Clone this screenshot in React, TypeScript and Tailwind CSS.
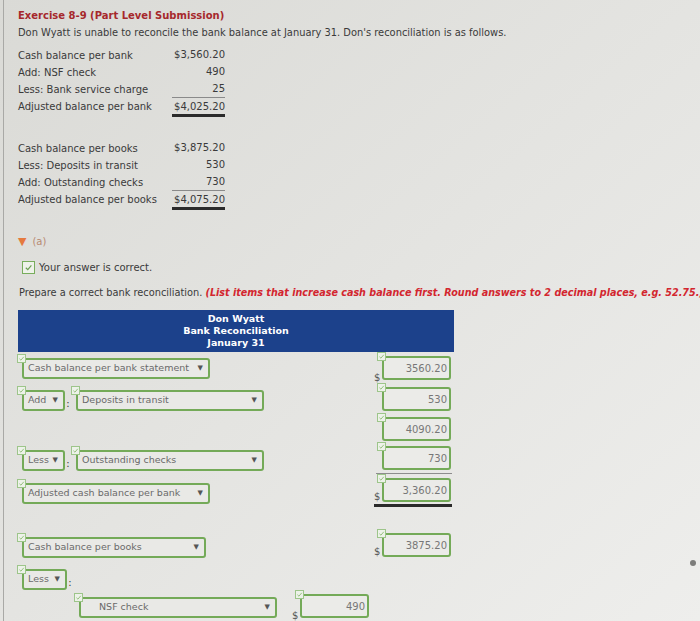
import React from 'react';

// small green "correct" marker that sits on the top-left corner of each field
function Tick({ className = '' }: { className?: string }) {
  return (
    <span
      className={`absolute w-[9px] h-[9px] border border-[#9dc58a] bg-[#edf2e9] flex items-center justify-center ${className}`}
    >
      <svg viewBox="0 0 10 10" className="w-[7px] h-[7px]">
        <path d="M2 5.3 L4.2 7.4 L8.2 2.6" fill="none" stroke="#95c07e" strokeWidth="1.4" />
      </svg>
    </span>
  );
}

function Select({ label, width, pad = 'pl-[4px]' }: { label: string; width: string; pad?: string }) {
  return (
    <div className="relative pt-[4px] pl-[5px]">
      <Tick className="top-0 left-0" />
      <div
        className={`${width} h-[21px] border-2 border-[#74aa58] rounded-[3px] bg-[#e9e9e6] flex items-center justify-between pr-[5px] ${pad} text-[#6a6a6a] text-[9.5px]`}
      >
        <span>{label}</span>
        <span className="text-[7px] text-[#555]">▼</span>
      </div>
    </div>
  );
}

function Amount({ value, dollar = false }: { value: string; dollar?: boolean }) {
  return (
    <div className="relative pt-[4px] pl-[8px]">
      <Tick className="top-0 left-[3px]" />
      {dollar && <span className="absolute left-0 bottom-[-2px] text-[10px] text-[#555]">$</span>}
      <div className="w-[69px] h-[24px] border-2 border-[#74aa58] rounded-[3px] bg-[#ebebe8] flex items-center justify-end pr-[2px] text-[#777]">
        {value}
      </div>
    </div>
  );
}

const bankRows = [
  ['Cash balance per bank', '$3,560.20'],
  ['Add: NSF check', '490'],
  ['Less: Bank service charge', '25'],
  ['Adjusted balance per bank', '$4,025.20'],
];

const bookRows = [
  ['Cash balance per books', '$3,875.20'],
  ['Less: Deposits in transit', '530'],
  ['Add: Outstanding checks', '730'],
  ['Adjusted balance per books', '$4,075.20'],
];

function MiniTable({ rows }: { rows: string[][] }) {
  return (
    <div className="flex flex-col">
      {rows.map(([label, amt], i) => {
        const last = i === rows.length - 1;
        return (
          <div key={label} className="flex h-[17px] items-center">
            <div className="w-[154px]">{label}</div>
            <div
              className={`w-[53px] text-right h-[17px] leading-[16px] ${
                last ? 'border-t border-[#8a8a8a] border-b-[3px] border-b-[#2b2b2b] h-[20px] leading-[17px]' : ''
              }`}
            >
              {amt}
            </div>
          </div>
        );
      })}
    </div>
  );
}

export default function App() {
  return (
    <div
      className="w-[700px] h-[621px] overflow-hidden bg-linear-to-br from-[#dadad6] via-[#e4e4e1] to-[#eeeeec] text-[10px] text-[#3a3a3a]"
      style={{ fontFamily: '"DejaVu Sans", Verdana, sans-serif' }}
    >
      <div className="ml-[3px] h-full border-l border-[#a9a9a6] pl-[14px] pt-[8px] relative">
        <div className="h-[16px] leading-[16px] font-bold text-[#a6282c]">Exercise 8-9 (Part Level Submission)</div>
        <div className="mt-[1px] h-[16px] leading-[16px] whitespace-nowrap text-[9.9px]">
          Don Wyatt is unable to reconcile the bank balance at January 31. Don's reconciliation is as follows.
        </div>

        <div className="mt-[6px]">
          <MiniTable rows={bankRows} />
        </div>
        <div className="mt-[25px]">
          <MiniTable rows={bookRows} />
        </div>

        <div className="mt-[26px] flex items-center gap-[6px] h-[14px]">
          <span className="text-[#e57a3e] text-[11px] leading-none">▼</span>
          <span className="text-[#b88a72]">(a)</span>
        </div>

        <div className="mt-[12px] flex items-center gap-[4px] pl-[4px] h-[14px]">
          <span className="w-[13px] h-[13px] border border-[#78ad5c] bg-[#eef2ea] flex items-center justify-center">
            <svg viewBox="0 0 10 10" className="w-[9px] h-[9px]">
              <path d="M2 5.3 L4.2 7.4 L8.2 2.6" fill="none" stroke="#6c9e52" strokeWidth="1.3" />
            </svg>
          </span>
          <span>Your answer is correct.</span>
        </div>

        <div className="mt-[12px] h-[14px] whitespace-nowrap pl-[1px] text-[9.8px]">
          Prepare a correct bank reconciliation.{' '}
          <span className="text-[#d3262f] font-bold italic text-[9.6px]">
            (List items that increase cash balance first. Round answers to 2 decimal places, e.g. 52.75.)
          </span>
        </div>

        {/* reconciliation form */}
        <div className="mt-[10px] w-[436px] h-[42px] bg-[#1c418b] text-white font-bold text-center leading-[12px] pt-[3px] text-[9.5px]">
          <div>Don Wyatt</div>
          <div>Bank Reconciliation</div>
          <div>January 31</div>
        </div>

        <div className="-ml-[1px] flex flex-col">
          {/* row 1 */}
          <div className="flex h-[31px]">
            <div className="w-[357px] pt-[2px]">
              <Select label="Cash balance per bank statement" width="w-[188px]" />
            </div>
            <Amount value="3560.20" dollar />
          </div>
          {/* row 2 */}
          <div className="flex h-[30px]">
            <div className="w-[357px] pt-[3px] flex items-end self-start">
              <Select label="Add" width="w-[43px]" />
              <span className="w-[6px] text-center">:</span>
              <Select label="Deposits in transit" width="w-[188px]" />
            </div>
            <div className="flex flex-col">
              <Amount value="530" />
              <div className="mt-[3px] ml-[2px] w-[76px] h-px bg-[#8d8d8d]" />
            </div>
          </div>
          {/* row 3 */}
          <div className="flex h-[29px]">
            <div className="w-[357px]" />
            <Amount value="4090.20" />
          </div>
          {/* row 4 */}
          <div className="flex h-[32px]">
            <div className="w-[357px] pt-[4px] flex items-end self-start">
              <Select label="Less" width="w-[43px]" />
              <span className="w-[6px] text-center">:</span>
              <Select label="Outstanding checks" width="w-[188px]" />
            </div>
            <div className="flex flex-col">
              <Amount value="730" />
              <div className="mt-[3px] ml-[2px] w-[76px] h-px bg-[#8d8d8d]" />
            </div>
          </div>
          {/* row 5 */}
          <div className="flex h-[54px]">
            <div className="w-[357px] pt-[5px]">
              <Select label="Adjusted cash balance per bank" width="w-[188px]" />
            </div>
            <div className="flex flex-col">
              <Amount value="3,360.20" dollar />
              <div className="mt-[2px] w-[78px] h-[3px] bg-[#2a2a2a]" />
            </div>
          </div>
          {/* row 6 */}
          <div className="flex h-[35px]">
            <div className="w-[357px] pt-[5px]">
              <Select label="Cash balance per books" width="w-[184px]" />
            </div>
            <div className="pt-[1px]">
              <Amount value="3875.20" dollar />
            </div>
          </div>
          {/* row 7 */}
          <div className="flex h-[27px]">
            <div className="pt-[2px] flex items-end self-start">
              <Select label="Less" width="w-[45px]" />
              <span className="w-[6px] text-center">:</span>
            </div>
          </div>
          {/* row 8 */}
          <div className="flex h-[31px]">
            <div className="w-[275px] pl-[57px] pt-[3px]">
              <Select label="NSF check" width="w-[198px]" pad="pl-[18px]" />
            </div>
            <Amount value="490" dollar />
          </div>
        </div>

        <span className="absolute left-[686px] top-[560px] w-[6px] h-[6px] rounded-full bg-[#7d7d7b]" />
      </div>
    </div>
  );
}
